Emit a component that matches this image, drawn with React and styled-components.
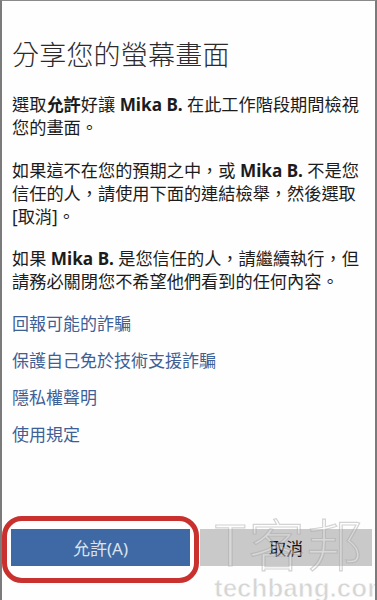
import React from "react";
import styled, { createGlobalStyle } from "styled-components";

const GlobalStyle = createGlobalStyle`
  html, body {
    margin: 0;
    padding: 0;
    background: #ffffff;
  }
  body {
    font-family: "Noto Sans", "Noto Sans CJK TC", sans-serif;
  }
`;

const Window = styled.div`
  position: relative;
  width: 377px;
  height: 600px;
  box-sizing: border-box;
  border-left: 2px solid #7b7b7b;
  border-right: 2px solid #7b7b7b;
  border-top: 1px solid #8a8a8a;
  padding: 36px 3px 34px 10px;
  display: flex;
  flex-direction: column;
  overflow: hidden;
  background: #fefefe;
`;

const Title = styled.h1`
  margin: 0;
  font-size: 27px;
  line-height: 36px;
  font-weight: 300;
  color: #2b2b2b;
  letter-spacing: 0.2px;
`;

const Body = styled.div`
  margin-top: 20px;
`;

const Para = styled.p`
  margin: 0 0 19.5px;
  font-size: 17.2px;
  line-height: 23px;
  color: #1c1c1c;

  b {
    font-weight: 700;
  }
`;

const Links = styled.nav`
  display: flex;
  flex-direction: column;
  gap: 14px;
  margin-top: -1px;
`;

const LinkItem = styled.a`
  font-size: 17px;
  line-height: 23px;
  color: #3d6096;
  text-decoration: none;
`;

const ButtonRow = styled.div`
  margin-top: auto;
  display: grid;
  grid-template-columns: 179px 1fr;
  gap: 10px;
  margin-left: -1px;
`;

const Button = styled.button`
  height: 37px;
  border: none;
  border-radius: 0;
  font-family: inherit;
  font-size: 17px;
  background: ${(p) => (p.$primary ? "#3f69a4" : "#c9c9c9")};
  color: ${(p) => (p.$primary ? "#dbe3ee" : "#111111")};
`;

const Highlight = styled.div`
  position: absolute;
  left: 0;
  top: 515px;
  width: 197px;
  height: 67px;
  box-sizing: border-box;
  border: 5px solid #c9312f;
  border-radius: 20px;
  pointer-events: none;
`;

const Watermark = styled.div`
  position: absolute;
  left: 212px;
  top: 510px;
  display: flex;
  flex-direction: column;
  pointer-events: none;
  color: rgba(255, 255, 255, 0.3);
  -webkit-text-stroke: 1.2px rgba(160, 160, 160, 0.45);
`;

const MarkBig = styled.span`
  font-family: "Noto Sans CJK TC", sans-serif;
  font-weight: 300;
  font-size: 56px;
  line-height: 62px;
  letter-spacing: 2px;
`;

const MarkSmall = styled.span`
  font-family: "Liberation Sans", Arial, sans-serif;
  font-weight: 700;
  font-size: 26px;
  line-height: 26px;
  color: rgba(185, 185, 185, 0.6);
  -webkit-text-stroke: 1px rgba(255, 255, 255, 0.8);
  margin-top: 2px;
`;

const links = ["回報可能的詐騙", "保護自己免於技術支援詐騙", "隱私權聲明", "使用規定"];

export default function App() {
  return (
    <>
      <GlobalStyle />
      <Window>
        <Title>分享您的螢幕畫面</Title>
        <Body>
          <Para>
            選取<b>允許</b>好讓 <b>Mika B.</b> 在此工作階段期間檢視您的畫面。
          </Para>
          <Para>
            如果這不在您的預期之中，或 <b>Mika B.</b> 不是您信任的人，請使用下面的連結檢舉，然後選取[取消]。
          </Para>
          <Para>
            如果 <b>Mika B.</b> 是您信任的人，請繼續執行，但請務必關閉您不希望他們看到的任何內容。
          </Para>
        </Body>
        <Links>
          {links.map((l) => (
            <LinkItem key={l} href="#">
              {l}
            </LinkItem>
          ))}
        </Links>
        <ButtonRow>
          <Button $primary>允許(A)</Button>
          <Button>取消</Button>
        </ButtonRow>
        <Highlight />
        <Watermark>
          <MarkBig>T客邦</MarkBig>
          <MarkSmall>techbang.com</MarkSmall>
        </Watermark>
      </Window>
    </>
  );
}
